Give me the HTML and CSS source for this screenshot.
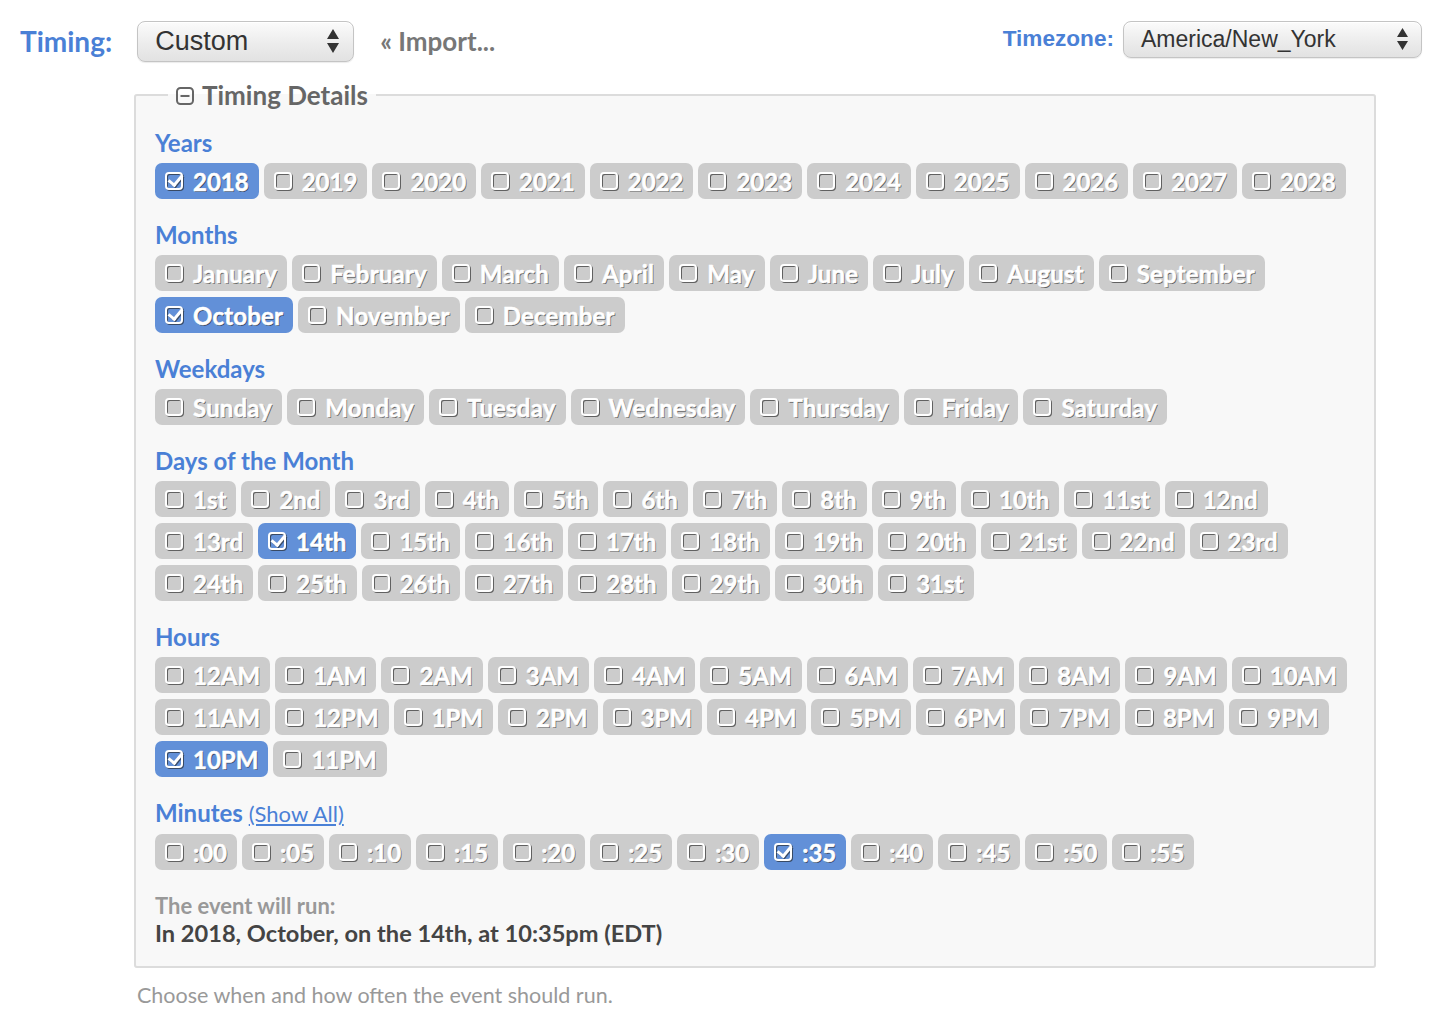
FILE: index.html
```html
<!DOCTYPE html>
<html>
<head>
<meta charset="utf-8">
<link rel="stylesheet" href="styles.css">
</head>
<body>
<div class="topbar">
  <span class="lbl-timing">Timing:</span>
  <div class="select sel-custom"><span>Custom</span><svg class="arr" width="12" height="26" viewBox="0 0 12 26"><path d="M6 1 L12 11 L0 11 Z M0 15 L12 15 L6 25 Z" fill="#333"/></svg></div>
  <span class="import">« Import...</span>
  <span class="spacer"></span>
  <span class="lbl-tz">Timezone:</span>
  <div class="select sel-tz"><span>America/New_York</span><svg class="arr" width="11" height="24" viewBox="0 0 11 24"><path d="M5.5 1 L11 10 L0 10 Z M0 14 L11 14 L5.5 23 Z" fill="#333"/></svg></div>
</div>

<div class="wrap">
<fieldset class="panel">
  <legend><svg class="minus" width="18" height="18" viewBox="0 0 18 18"><rect x="1" y="1" width="16" height="16" rx="3.5" fill="none" stroke="#666" stroke-width="2"/><path d="M4.5 9 H13.5" stroke="#666" stroke-width="2"/></svg>Timing Details</legend>

  <div class="section first">
    <div class="title">Years</div>
    <div class="chips">
      <div class="row">
        <span class="chip on"><i class="ck"></i>2018</span>
        <span class="chip"><i class="bx"></i>2019</span>
        <span class="chip"><i class="bx"></i>2020</span>
        <span class="chip"><i class="bx"></i>2021</span>
        <span class="chip"><i class="bx"></i>2022</span>
        <span class="chip"><i class="bx"></i>2023</span>
        <span class="chip"><i class="bx"></i>2024</span>
        <span class="chip"><i class="bx"></i>2025</span>
        <span class="chip"><i class="bx"></i>2026</span>
        <span class="chip"><i class="bx"></i>2027</span>
        <span class="chip"><i class="bx"></i>2028</span>
      </div>
    </div>
  </div>

  <div class="section">
    <div class="title">Months</div>
    <div class="chips">
      <div class="row words">
        <span class="chip"><i class="bx"></i>January</span>
        <span class="chip"><i class="bx"></i>February</span>
        <span class="chip"><i class="bx"></i>March</span>
        <span class="chip"><i class="bx"></i>April</span>
        <span class="chip"><i class="bx"></i>May</span>
        <span class="chip"><i class="bx"></i>June</span>
        <span class="chip"><i class="bx"></i>July</span>
        <span class="chip"><i class="bx"></i>August</span>
        <span class="chip"><i class="bx"></i>September</span>
      </div>
      <div class="row words">
        <span class="chip on"><i class="ck"></i>October</span>
        <span class="chip"><i class="bx"></i>November</span>
        <span class="chip"><i class="bx"></i>December</span>
      </div>
    </div>
  </div>

  <div class="section">
    <div class="title">Weekdays</div>
    <div class="chips">
      <div class="row words">
        <span class="chip"><i class="bx"></i>Sunday</span>
        <span class="chip"><i class="bx"></i>Monday</span>
        <span class="chip"><i class="bx"></i>Tuesday</span>
        <span class="chip"><i class="bx"></i>Wednesday</span>
        <span class="chip"><i class="bx"></i>Thursday</span>
        <span class="chip"><i class="bx"></i>Friday</span>
        <span class="chip"><i class="bx"></i>Saturday</span>
      </div>
    </div>
  </div>

  <div class="section">
    <div class="title">Days of the Month</div>
    <div class="chips">
      <div class="row">
        <span class="chip"><i class="bx"></i>1st</span>
        <span class="chip"><i class="bx"></i>2nd</span>
        <span class="chip"><i class="bx"></i>3rd</span>
        <span class="chip"><i class="bx"></i>4th</span>
        <span class="chip"><i class="bx"></i>5th</span>
        <span class="chip"><i class="bx"></i>6th</span>
        <span class="chip"><i class="bx"></i>7th</span>
        <span class="chip"><i class="bx"></i>8th</span>
        <span class="chip"><i class="bx"></i>9th</span>
        <span class="chip"><i class="bx"></i>10th</span>
        <span class="chip"><i class="bx"></i>11st</span>
        <span class="chip"><i class="bx"></i>12nd</span>
      </div>
      <div class="row">
        <span class="chip"><i class="bx"></i>13rd</span>
        <span class="chip on"><i class="ck"></i>14th</span>
        <span class="chip"><i class="bx"></i>15th</span>
        <span class="chip"><i class="bx"></i>16th</span>
        <span class="chip"><i class="bx"></i>17th</span>
        <span class="chip"><i class="bx"></i>18th</span>
        <span class="chip"><i class="bx"></i>19th</span>
        <span class="chip"><i class="bx"></i>20th</span>
        <span class="chip"><i class="bx"></i>21st</span>
        <span class="chip"><i class="bx"></i>22nd</span>
        <span class="chip"><i class="bx"></i>23rd</span>
      </div>
      <div class="row">
        <span class="chip"><i class="bx"></i>24th</span>
        <span class="chip"><i class="bx"></i>25th</span>
        <span class="chip"><i class="bx"></i>26th</span>
        <span class="chip"><i class="bx"></i>27th</span>
        <span class="chip"><i class="bx"></i>28th</span>
        <span class="chip"><i class="bx"></i>29th</span>
        <span class="chip"><i class="bx"></i>30th</span>
        <span class="chip"><i class="bx"></i>31st</span>
      </div>
    </div>
  </div>

  <div class="section">
    <div class="title">Hours</div>
    <div class="chips">
      <div class="row">
        <span class="chip"><i class="bx"></i>12AM</span>
        <span class="chip"><i class="bx"></i>1AM</span>
        <span class="chip"><i class="bx"></i>2AM</span>
        <span class="chip"><i class="bx"></i>3AM</span>
        <span class="chip"><i class="bx"></i>4AM</span>
        <span class="chip"><i class="bx"></i>5AM</span>
        <span class="chip"><i class="bx"></i>6AM</span>
        <span class="chip"><i class="bx"></i>7AM</span>
        <span class="chip"><i class="bx"></i>8AM</span>
        <span class="chip"><i class="bx"></i>9AM</span>
        <span class="chip"><i class="bx"></i>10AM</span>
      </div>
      <div class="row">
        <span class="chip"><i class="bx"></i>11AM</span>
        <span class="chip"><i class="bx"></i>12PM</span>
        <span class="chip"><i class="bx"></i>1PM</span>
        <span class="chip"><i class="bx"></i>2PM</span>
        <span class="chip"><i class="bx"></i>3PM</span>
        <span class="chip"><i class="bx"></i>4PM</span>
        <span class="chip"><i class="bx"></i>5PM</span>
        <span class="chip"><i class="bx"></i>6PM</span>
        <span class="chip"><i class="bx"></i>7PM</span>
        <span class="chip"><i class="bx"></i>8PM</span>
        <span class="chip"><i class="bx"></i>9PM</span>
      </div>
      <div class="row">
        <span class="chip on"><i class="ck"></i>10PM</span>
        <span class="chip"><i class="bx"></i>11PM</span>
      </div>
    </div>
  </div>

  <div class="section">
    <div class="title">Minutes <a class="showall" href="#">(Show All)</a></div>
    <div class="chips">
      <div class="row">
        <span class="chip"><i class="bx"></i>:00</span>
        <span class="chip"><i class="bx"></i>:05</span>
        <span class="chip"><i class="bx"></i>:10</span>
        <span class="chip"><i class="bx"></i>:15</span>
        <span class="chip"><i class="bx"></i>:20</span>
        <span class="chip"><i class="bx"></i>:25</span>
        <span class="chip"><i class="bx"></i>:30</span>
        <span class="chip on"><i class="ck"></i>:35</span>
        <span class="chip"><i class="bx"></i>:40</span>
        <span class="chip"><i class="bx"></i>:45</span>
        <span class="chip"><i class="bx"></i>:50</span>
        <span class="chip"><i class="bx"></i>:55</span>
      </div>
    </div>
  </div>

  <div class="summary">
    <div class="sum-lbl">The event will run:</div>
    <div class="sum-txt">In 2018, October, on the 14th, at 10:35pm (EDT)</div>
  </div>
</fieldset>
<div class="help">Choose when and how often the event should run.</div>
</div>
</body>
</html>
```

FILE: styles.css
```css
html, body {
  margin: 0;
  padding: 0;
  background: #fff;
}
body {
  font-family: Lato, "Liberation Sans", sans-serif;
  color: #333;
}
.topbar {
  display: flex;
  align-items: center;
  padding: 20px 16px 0 20px;
  height: 42px;
}
.lbl-timing {
  font-weight: 700;
  font-size: 28px;
  color: #4a80d6;
  margin-right: 25px;
  margin-top: -1px;
}
.select {
  box-sizing: border-box;
  display: flex;
  align-items: center;
  border: 1.5px solid #c4c4c4;
  border-radius: 8px;
  background: linear-gradient(#fbfbfb, #ebebeb 60%, #e2e2e2);
  box-shadow: inset 0 1px 0 #fff, 0 1px 1px rgba(0,0,0,0.08);
  font-family: "Liberation Sans", Arial, sans-serif;
  color: #333;
}
.select span { flex: 1; }
.sel-custom {
  width: 217px;
  height: 41px;
  padding: 0 14px 0 17px;
  font-size: 27px;
}
.import {
  margin-left: 26px;
  font-weight: 700;
  font-size: 26px;
  color: #777;
  margin-top: -1px;
}
.spacer { flex: 1; }
.lbl-tz {
  font-family: "Liberation Sans", Arial, sans-serif;
  font-weight: 700;
  font-size: 22.6px;
  color: #4a80d6;
  margin-right: 9px;
  margin-top: -4px;
}
.sel-tz {
  width: 299px;
  height: 37px;
  padding: 0 13px 0 17px;
  font-size: 23px;
  margin-top: -4px;
}
.wrap {
  padding: 0 62px 0 134px;
}
.panel {
  margin: 18px 0 0 0;
  border: 2px solid #dcdcdc;
  border-radius: 3px;
  background: #f8f8f8;
  padding: 18px 19px 19px 19px;
  min-width: 0;
}
legend {
  margin-left: 13px;
  padding: 0 8px;
  font-weight: 700;
  font-size: 26px;
  line-height: 30px;
  color: #666;
  display: flex;
  align-items: center;
}
.minus {
  margin-right: 8px;
  margin-top: 1px;
}
.section { margin-top: 21px; }
.section.first { margin-top: 0; }
.title {
  font-weight: 700;
  font-size: 24px;
  line-height: 30px;
  color: #4a80d6;
  margin-bottom: 5px;
}
.showall {
  font-weight: 400;
  font-size: 22px;
  color: #4a80d6;
  text-decoration: underline;
}
.chips {
  display: flex;
  flex-direction: column;
  gap: 6px;
}
.row {
  display: flex;
  gap: 5px;
}
.row.words .chip { letter-spacing: 0.18px; }
.chip {
  display: inline-flex;
  align-items: center;
  height: 36px;
  box-sizing: border-box;
  padding: 0 10px 0 10px;
  border-radius: 7px;
  background: #cccccc;
  color: #fff;
  font-weight: 700;
  font-size: 24px;
  -webkit-text-stroke: 0.5px #fff;
  text-shadow: 1px 1px 0 rgba(30,30,30,0.62);
  white-space: nowrap;
}
.chip.on { background: #6290d8; }
.bx, .ck {
  display: inline-block;
  box-sizing: border-box;
  width: 18px;
  height: 18px;
  margin-right: 10px;
  border: 2px solid #fff;
  border-radius: 4px;
  filter: drop-shadow(1px 1px 0 rgba(30,30,30,0.62));
  position: relative;
  flex-shrink: 0;
}
.ck::after {
  content: "";
  position: absolute;
  left: 4px;
  top: -2px;
  width: 6px;
  height: 11px;
  border-right: 3px solid #fff;
  border-bottom: 3px solid #fff;
  transform: rotate(40deg);
}
.summary { margin-top: 23px; }
.sum-lbl {
  font-weight: 700;
  font-size: 22px;
  line-height: 26px;
  color: #999;
}
.sum-txt {
  font-weight: 700;
  font-size: 23.6px;
  line-height: 28px;
  color: #444;
}
.help {
  margin-top: 14px;
  margin-left: 3px;
  font-size: 21.5px;
  color: #999;
}
```
